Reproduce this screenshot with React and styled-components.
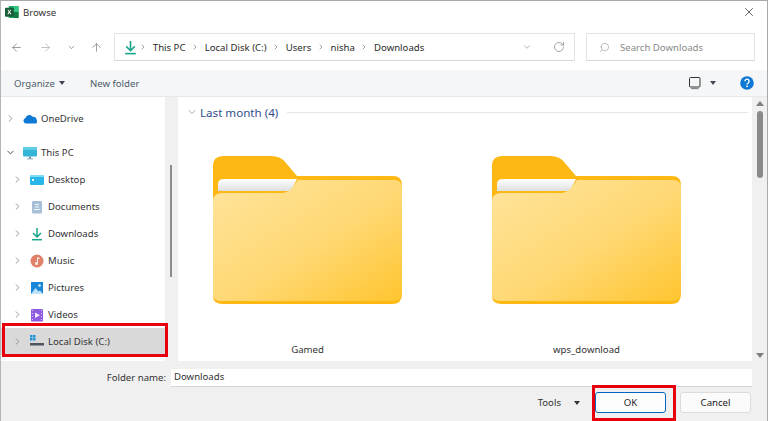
import React from "react";
import styled, { createGlobalStyle } from "styled-components";
import {
  ArrowLeft,
  ArrowRight,
  ArrowUp,
  ChevronDown,
  ChevronRight,
  RotateCw,
  Search,
  X,
} from "lucide-react";

const GlobalStyle = createGlobalStyle`
  html, body {
    margin: 0;
    padding: 0;
    background: #f0f0f0;
  }
  * {
    box-sizing: border-box;
  }
`;

const Dialog = styled.div`
  position: relative;
  width: 768px;
  height: 421px;
  overflow: hidden;
  display: flex;
  flex-direction: column;
  background: #fff;
  border-top: 1px solid #a9a9a9;
  border-left: 1px solid #b5b5b5;
  border-right: 1px solid #a9a9a9;
  font-family: "Noto Sans", "Open Sans", sans-serif;
  font-size: 9.6px;
  color: #2b2b2b;
`;

const TitleBar = styled.div`
  height: 23px;
  flex: none;
  display: flex;
  align-items: center;
  padding: 0 11px 1px 4px;
  gap: 4px;
`;

const TitleText = styled.span`
  flex: 1;
  color: #333;
`;

const NavBar = styled.div`
  height: 46px;
  flex: none;
  display: flex;
  align-items: center;
  padding: 0 11px 0 0;
`;

const NavButtons = styled.div`
  width: 113px;
  flex: none;
  display: flex;
  align-items: center;
  color: #777;
`;

const NavButton = styled.span`
  width: ${({ $w }) => $w}px;
  display: flex;
  justify-content: center;
  color: ${({ $muted }) => ($muted ? "#a8a8a8" : "#777")};
`;

const AddressBar = styled.div`
  width: 461px;
  height: 28px;
  flex: none;
  display: flex;
  align-items: center;
  padding: 0 8px 0 8px;
  border: 1px solid #e4e4e4;
  border-bottom-color: #d8d8d8;
`;

const Crumbs = styled.div`
  flex: 1;
  display: flex;
  align-items: center;
  gap: 5.6px;
`;

const RootIcon = styled.span`
  display: flex;
  margin-right: -4.4px;
`;

const Sep = styled.span`
  display: flex;
  color: #777;
`;

const Crumb = styled.span`
  color: #2b2b2b;
`;

const SearchBox = styled.div`
  width: 169px;
  height: 28px;
  flex: none;
  margin-left: 11px;
  display: flex;
  align-items: center;
  gap: 10px;
  padding-left: 12px;
  color: #8a8a8a;
  border: 1px solid #e4e4e4;
  border-bottom-color: #d8d8d8;
`;

const ToolBar = styled.div`
  height: 27px;
  flex: none;
  display: flex;
  align-items: center;
  padding: 0 13px 0 13px;
  background: #f5f6f7;
  border-bottom: 1px solid #e8e8e8;
  color: #4d5a68;
`;

const ToolLabel = styled.span`
  margin-right: ${({ $gap }) => $gap}px;
  display: flex;
  align-items: center;
  gap: 4px;
`;

const Caret = styled.span`
  width: 0;
  height: 0;
  border-left: 3.5px solid transparent;
  border-right: 3.5px solid transparent;
  border-top: 4px solid ${({ $color }) => $color || "#445"};
`;

const ViewCaret = styled(Caret)`
  margin: 0 24px 0 8px;
`;

const ToolSpacer = styled.div`
  flex: 1;
`;

const Main = styled.div`
  flex: 1;
  min-height: 0;
  display: flex;
`;

const Sidebar = styled.div`
  width: 164px;
  flex: none;
  padding-top: 8px;
`;

const TreeRow = styled.div`
  height: 27px;
  display: flex;
  align-items: center;
  padding-left: ${({ $depth }) => ($depth ? 11 : 4)}px;
  margin-bottom: ${({ $space }) => ($space ? 7 : 0)}px;
  background: ${({ $selected }) => ($selected ? "#d9d9d9" : "transparent")};
  color: #333;
`;

const TreeChevron = styled.span`
  width: 11px;
  display: flex;
  justify-content: center;
  color: ${({ $open }) => ($open ? "#444" : "#909090")};
`;

const TreeIcon = styled.span`
  width: 14px;
  height: 14px;
  margin: 0 4px 0 7px;
  flex: none;
  display: flex;
`;

const Gutter = styled.div`
  width: 13px;
  flex: none;
  background: #f0f0f0;
  display: flex;
  justify-content: center;
`;

const GutterThumb = styled.div`
  width: 2px;
  height: 112px;
  margin-top: 68px;
  margin-right: 1px;
  background: #8d8d8d;
`;

const Content = styled.div`
  flex: 1;
  min-width: 0;
  padding: 7px 4px 0 8px;
  overflow: hidden;
`;

const GroupHeader = styled.div`
  height: 16px;
  display: flex;
  align-items: center;
  gap: 2px;
  font-size: 11.6px;
  color: #324f8c;
`;

const GroupLine = styled.div`
  flex: 1;
  height: 1px;
  margin-left: 7px;
  background: #e6e6e6;
`;

const ItemGrid = styled.div`
  display: grid;
  grid-template-columns: repeat(2, 279px);
  padding: 36px 0 0 27px;
`;

const Item = styled.div`
  width: 189px;
  display: flex;
  flex-direction: column;
  align-items: center;
`;

const ItemName = styled.span`
  margin-top: 39px;
  color: #333;
`;

const ScrollTrack = styled.div`
  width: 15px;
  flex: none;
  background: #f0f0f0;
  display: flex;
  flex-direction: column;
  align-items: center;
  padding: 4px 0 3px;
`;

const ScrollArrow = styled.span`
  width: 0;
  height: 0;
  border-left: 4px solid transparent;
  border-right: 4px solid transparent;
  ${({ $down }) =>
    $down ? "border-top: 5px solid #7f7f7f;" : "border-bottom: 5px solid #7f7f7f;"}
`;

const ScrollThumb = styled.div`
  width: 6px;
  height: 67px;
  margin-top: 5px;
  border-radius: 3px;
  background: #8a8a8a;
`;

const ScrollFill = styled.div`
  flex: 1;
`;

const Footer = styled.div`
  height: 60px;
  flex: none;
  background: #f0f0f0;
  position: relative;
`;

const NameRow = styled.div`
  display: flex;
  align-items: center;
  height: 18px;
  margin-top: 8px;
  padding-right: 15px;
`;

const NameLabel = styled.span`
  width: 165px;
  flex: none;
  text-align: right;
  padding-bottom: 1px;
  color: #333;
`;

const NameInput = styled.div`
  flex: 1;
  height: 18px;
  margin-left: 5px;
  padding-left: 3px;
  line-height: 15px;
  background: #fff;
  border-bottom: 1px solid #d6d6d6;
  color: #333;
`;

const ButtonRow = styled.div`
  display: flex;
  align-items: center;
  justify-content: flex-end;
  margin-top: 5px;
  padding-right: 16px;
`;

const ToolsMenu = styled.span`
  display: flex;
  align-items: center;
  gap: 13px;
  margin-right: 15px;
  color: #333;
`;

const Button = styled.button`
  width: 71px;
  height: 21px;
  margin-left: ${({ $gap }) => $gap || 0}px;
  padding: 0;
  font: inherit;
  color: #222;
  border-radius: 3px;
  background: ${({ $primary }) => ($primary ? "#fdfdfd" : "#fbfbfb")};
  border: 1px solid ${({ $primary }) => ($primary ? "#0067c0" : "#dcdcdc")};
`;

const Callout = styled.div`
  position: absolute;
  border: 3px solid #e8000d;
  left: ${({ $x }) => $x}px;
  top: ${({ $y }) => $y}px;
  width: ${({ $w }) => $w}px;
  height: ${({ $h }) => $h}px;
`;

const ExcelIcon = () => (
  <svg width="14" height="14" viewBox="0 0 15 15">
    <rect x="4" y="1" width="10.5" height="13" rx="1" fill="#21a366" />
    <rect x="9" y="1" width="5.5" height="6.5" fill="#33c481" />
    <rect x="9" y="7.5" width="5.5" height="6.5" fill="#107c41" />
    <rect x="0" y="3" width="9.5" height="9.5" rx="1" fill="#185c37" />
    <path d="M2.6 5l1.5 2.3L2.5 10h1.2l1-1.8 1 1.8h1.2L5.3 7.3 6.8 5H5.7l-1 1.7L3.8 5z" fill="#fff" />
  </svg>
);

const DownloadIcon = ({ size = 14 }) => (
  <svg width={size} height={size} viewBox="0 0 14 14" fill="none">
    <path d="M7 1v8.500M3 6l4 4 4-4" stroke="#17a689" strokeWidth="1.500" />
    <path d="M2 12.700h10" stroke="#17a689" strokeWidth="1.500" />
  </svg>
);

const OneDriveIcon = () => (
  <svg width="14" height="14" viewBox="0 0 14 14">
    <path d="M3 11.500a2.800 2.800 0 0 1-.4-5.500 3.800 3.800 0 0 1 7-1.200 3.200 3.200 0 0 1 4 3.400 2 2 0 0 1-.6 3.300z" fill="#0f78d4" />
  </svg>
);

const PcIcon = () => (
  <svg width="14" height="14" viewBox="0 0 14 14">
    <rect x="0" y="1" width="14" height="9.500" rx="1" fill="#35b5d8" />
    <rect x="0" y="1" width="14" height="3" fill="#5fcde4" />
    <path d="M6 10.500h2v2H6z" fill="#6b8ea0" />
    <path d="M4 12.500h6v.8H4z" fill="#6b8ea0" />
  </svg>
);

const DesktopIcon = () => (
  <svg width="14" height="14" viewBox="0 0 14 14">
    <rect x="0" y="2" width="14" height="10" rx="1" fill="#29b6e8" />
    <rect x="0" y="2" width="14" height="2" fill="#7bdcf5" />
    <rect x="2" y="6" width="2" height="2" fill="#e6f8fd" />
  </svg>
);

const DocumentsIcon = () => (
  <svg width="14" height="14" viewBox="0 0 14 14">
    <rect x="2" y="1" width="10" height="12.500" rx="1" fill="#a8bfd8" />
    <path d="M5 4h4v1H5zM5 6.500h4v1H5zM4 9h6v1H4z" fill="#f4f7fa" />
  </svg>
);

const MusicIcon = () => (
  <svg width="14" height="14" viewBox="0 0 14 14">
    <circle cx="7" cy="7" r="6.500" fill="#e0826a" />
    <path d="M7 3.500h2.500v1.500H8v4.500a1.500 1.500 0 1 1-1-1.400z" fill="#fbeee9" />
  </svg>
);

const PicturesIcon = () => (
  <svg width="14" height="14" viewBox="0 0 14 14">
    <rect x="1" y="1" width="12" height="12" fill="#1b87d9" />
    <circle cx="9.500" cy="4.500" r="1.300" fill="#d5edfb" />
    <path d="M1 13l4.500-6 3 3.500 1.500-1 3 3.500z" fill="#bfe3f8" />
  </svg>
);

const VideosIcon = () => (
  <svg width="14" height="14" viewBox="0 0 14 14">
    <rect x="1" y="1" width="12" height="12.500" rx="1" fill="#8f5be0" />
    <path d="M5 4.500l5 2.700-5 2.700z" fill="#f4e9ff" />
    <path d="M2 2h1v1H2zM2 5h1v1H2zM2 8h1v1H2zM2 11h1v1H2zM11 2h1v1h-1zM11 5h1v1h-1zM11 8h1v1h-1zM11 11h1v1h-1z" fill="#d9c4f7" />
  </svg>
);

const DiskIcon = () => (
  <svg width="14" height="14" viewBox="0 0 14 14">
    <path d="M0 0h2.500v2.500H0zM3 0h2.500v2.500H3zM0 3h2.500v2.500H0zM3 3h2.500v2.500H3z" fill="#1f93d8" />
    <rect x="0" y="8" width="14" height="2.500" fill="#4d5560" />
  </svg>
);

const LayoutIcon = () => (
  <svg width="14" height="14" viewBox="0 0 14 14" fill="none">
    <rect x="1.500" y="1.500" width="10.500" height="9.500" rx="1" stroke="#333" strokeWidth="1" />
    <path d="M3 12.500h7.500" stroke="#888" strokeWidth="1.300" />
  </svg>
);

const HelpIcon = () => (
  <svg width="14" height="14" viewBox="0 0 14 14">
    <circle cx="7" cy="7" r="6.800" fill="#0f78d4" />
    <path d="M4.900 5.300a2.100 2.100 0 1 1 3.300 1.700c-.8.500-1.100.9-1.100 1.600" fill="none" stroke="#fff" strokeWidth="1.400" />
    <rect x="6.300" y="9.500" width="1.600" height="1.600" fill="#fff" />
  </svg>
);

const FolderArt = () => (
  <svg width="189" height="148" viewBox="0 0 189 148">
    <defs>
      <linearGradient id="folderFront" x1="0" y1="0" x2="1" y2="1">
        <stop offset="0" stopColor="#ffe49c" />
        <stop offset="0.55" stopColor="#ffd873" />
        <stop offset="1" stopColor="#ffc52f" />
      </linearGradient>
      <linearGradient id="folderPaper" x1="0" y1="0" x2="0" y2="1">
        <stop offset="0" stopColor="#ffffff" />
        <stop offset="1" stopColor="#dedfe0" />
      </linearGradient>
    </defs>
    <path
      d="M0 140V10Q0 0 10 0H58Q68 0 73 7L84 20H180Q189 20 189 29V138Q189 148 179 148H10Q0 148 0 140Z"
      fill="#fdb813"
    />
    <path d="M5 35V28Q5 23 11 23H84L78 35Z" fill="url(#folderPaper)" />
    <path
      d="M0 139V45Q0 38 8 37H70Q76 36 80 31L85 24H181Q189 24 189 32V136Q189 145 180 145H9Q0 145 0 139Z"
      fill="url(#folderFront)"
    />
  </svg>
);

const treeItems = [
  { label: "OneDrive", icon: <OneDriveIcon />, space: true },
  { label: "This PC", icon: <PcIcon />, open: true },
  { label: "Desktop", icon: <DesktopIcon />, depth: 1 },
  { label: "Documents", icon: <DocumentsIcon />, depth: 1 },
  { label: "Downloads", icon: <DownloadIcon />, depth: 1 },
  { label: "Music", icon: <MusicIcon />, depth: 1 },
  { label: "Pictures", icon: <PicturesIcon />, depth: 1 },
  { label: "Videos", icon: <VideosIcon />, depth: 1 },
  { label: "Local Disk (C:)", icon: <DiskIcon />, depth: 1, selected: true },
];

const crumbs = ["This PC", "Local Disk (C:)", "Users", "nisha", "Downloads"];

const App = () => (
  <Dialog>
    <GlobalStyle />
    <TitleBar>
      <ExcelIcon />
      <TitleText>Browse</TitleText>
      <X size={14} color="#333" strokeWidth={1.3} />
    </TitleBar>
    <NavBar>
      <NavButtons>
        <NavButton $w={31}>
          <ArrowLeft size={13} strokeWidth={1.3} />
        </NavButton>
        <NavButton $w={26} $muted>
          <ArrowRight size={13} strokeWidth={1.3} />
        </NavButton>
        <NavButton $w={26}>
          <ChevronDown size={9} strokeWidth={2} />
        </NavButton>
        <NavButton $w={24}>
          <ArrowUp size={13} strokeWidth={1.3} />
        </NavButton>
      </NavButtons>
      <AddressBar>
        <Crumbs>
          <RootIcon>
            <DownloadIcon size={15} />
          </RootIcon>
          {crumbs.map((crumb) => (
            <React.Fragment key={crumb}>
              <Sep>
                <ChevronRight size={8} strokeWidth={2} />
              </Sep>
              <Crumb>{crumb}</Crumb>
            </React.Fragment>
          ))}
        </Crumbs>
        <ChevronDown size={10} color="#888" strokeWidth={1.5} />
        <RotateCw
          size={12}
          color="#777"
          strokeWidth={1.3}
          style={{ marginLeft: 21, marginRight: 1 }}
        />
      </AddressBar>
      <SearchBox>
        <Search size={11} strokeWidth={1.2} style={{ transform: "scaleX(-1)" }} />
        Search Downloads
      </SearchBox>
    </NavBar>
    <ToolBar>
      <ToolLabel $gap={25}>
        Organize <Caret />
      </ToolLabel>
      <ToolLabel>New folder</ToolLabel>
      <ToolSpacer />
      <LayoutIcon />
      <ViewCaret />
      <HelpIcon />
    </ToolBar>
    <Main>
      <Sidebar>
        {treeItems.map((item) => (
          <TreeRow
            key={item.label}
            $depth={item.depth}
            $space={item.space}
            $selected={item.selected}
          >
            <TreeChevron $open={item.open}>
              {item.open ? (
                <ChevronDown size={11} strokeWidth={2} />
              ) : (
                <ChevronRight size={11} strokeWidth={2} />
              )}
            </TreeChevron>
            <TreeIcon>{item.icon}</TreeIcon>
            {item.label}
          </TreeRow>
        ))}
      </Sidebar>
      <Gutter>
        <GutterThumb />
      </Gutter>
      <Content>
        <GroupHeader>
          <ChevronDown size={12} color="#8a9099" strokeWidth={1.5} />
          Last month (4)
          <GroupLine />
        </GroupHeader>
        <ItemGrid>
          <Item>
            <FolderArt />
            <ItemName>Gamed</ItemName>
          </Item>
          <Item>
            <FolderArt />
            <ItemName>wps_download</ItemName>
          </Item>
        </ItemGrid>
      </Content>
      <ScrollTrack>
        <ScrollArrow />
        <ScrollThumb />
        <ScrollFill />
        <ScrollArrow $down />
      </ScrollTrack>
    </Main>
    <Footer>
      <NameRow>
        <NameLabel>Folder name:</NameLabel>
        <NameInput>Downloads</NameInput>
      </NameRow>
      <ButtonRow>
        <ToolsMenu>
          Tools <Caret $color="#333" />
        </ToolsMenu>
        <Button $primary>OK</Button>
        <Button $gap={14}>Cancel</Button>
      </ButtonRow>
    </Footer>
    <Callout $x={1} $y={322} $w={166} $h={34} />
    <Callout $x={591} $y={384} $w={84} $h={36} />
  </Dialog>
);

export default App;
